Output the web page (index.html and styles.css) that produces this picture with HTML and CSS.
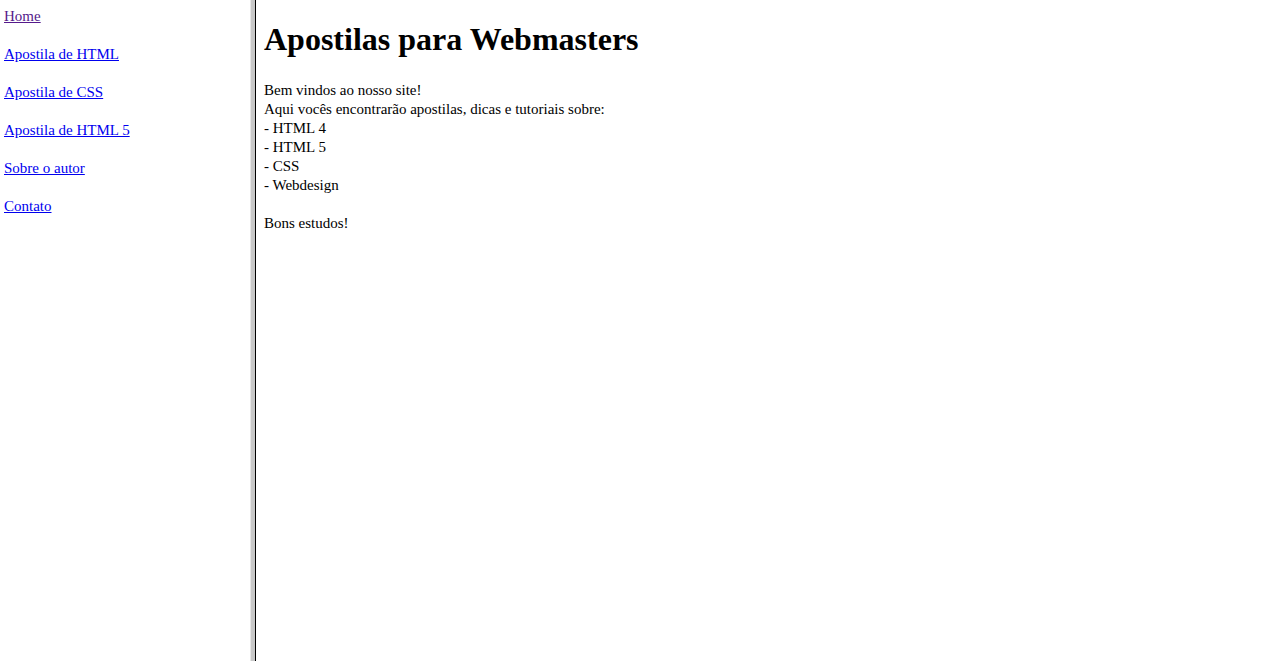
FILE: index.html
```html
<!DOCTYPE html>
<html>
<head>
<meta charset="utf-8">
<link rel="stylesheet" href="styles.css">
</head>
<body>
<div class="frames">
  <nav class="menu">
    <a class="visited" href="#">Home</a><br><br>
    <a href="#">Apostila de HTML</a><br><br>
    <a href="#">Apostila de CSS</a><br><br>
    <a href="#">Apostila de HTML 5</a><br><br>
    <a href="#">Sobre o autor</a><br><br>
    <a href="#">Contato</a>
  </nav>
  <div class="divider"></div>
  <main class="content">
    <h1>Apostilas para Webmasters</h1>
    <p>Bem vindos ao nosso site!<br>
    Aqui vocês encontrarão apostilas, dicas e tutoriais sobre:<br>
    - HTML 4<br>
    - HTML 5<br>
    - CSS<br>
    - Webdesign<br>
    <br>
    Bons estudos!</p>
  </main>
</div>
</body>
</html>
```
FILE: styles.css
```css
html, body {
  margin: 0;
  padding: 0;
  height: 100%;
  background: #fff;
}
body {
  font-family: "Liberation Serif", "Times New Roman", serif;
  font-size: 15px;
  line-height: 19px;
  color: #000;
}
.frames {
  display: flex;
  height: 100%;
}
.menu {
  width: 242px;
  padding: 7px 4px 4px;
  flex: none;
}
.menu a {
  color: #0000ee;
}
.menu a.visited {
  color: #551a8b;
}
.divider {
  flex: none;
  width: 6px;
  box-sizing: border-box;
  background: #c8c8c8;
  border-left: 1px solid #e6e6e6;
  border-right: 1px solid #000;
}
.content {
  flex: 1;
  padding: 8px;
}
.content h1 {
  font-size: 32px;
  line-height: 37px;
  margin: 13px 0 23px;
}
.content p {
  margin: 0;
}
```
